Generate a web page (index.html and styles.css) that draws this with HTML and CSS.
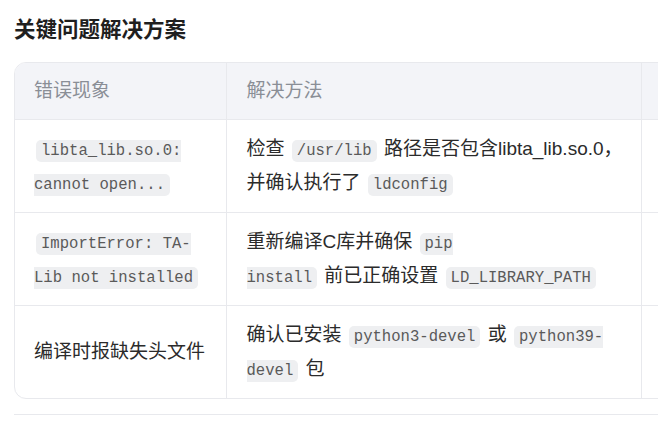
FILE: index.html
```html
<!DOCTYPE html>
<html lang="zh-CN">
<head>
<meta charset="utf-8">
<title>关键问题解决方案</title>
<link rel="stylesheet" href="styles.css">
</head>
<body>
<div class="page">
  <h3 class="title">关键问题解决方案</h3>
  <div class="table-wrap">
    <table class="grid">
      <colgroup>
        <col class="c1"><col class="c2"><col class="c3">
      </colgroup>
      <thead>
        <tr><th>错误现象</th><th>解决方法</th><th></th></tr>
      </thead>
      <tbody>
        <tr>
          <td><code>libta_lib.so.0: cannot open...</code></td>
          <td>检查 <code>/usr/lib</code> 路径是否包含libta_lib.so.0，并确认执行了 <code>ldconfig</code></td>
          <td></td>
        </tr>
        <tr>
          <td><code>ImportError: TA-Lib not installed</code></td>
          <td>重新编译C库并确保 <code>pip<br>install</code> 前已正确设置 <code>LD_LIBRARY_PATH</code></td>
          <td></td>
        </tr>
        <tr>
          <td>编译时报缺失头文件</td>
          <td>确认已安装 <code>python3-devel</code> 或 <code>python39-devel</code> 包</td>
          <td></td>
        </tr>
      </tbody>
    </table>
  </div>
  <div class="rule"></div>
</div>
</body>
</html>
```

FILE: styles.css
```css
html, body {
  margin: 0;
  padding: 0;
  background: #ffffff;
  overflow: hidden;
}

body {
  font-family: "Liberation Sans", "Noto Sans CJK SC", sans-serif;
  color: #2b2b2b;
}

.page {
  width: 658px;
  height: 423px;
  overflow: hidden;
  padding: 16px 0 0 14px;
  box-sizing: border-box;
}

.title {
  margin: 0;
  font-family: "Noto Sans CJK SC", sans-serif;
  font-size: 21.5px;
  line-height: 24px;
  font-weight: 700;
  color: #1f1f1f;
}

.table-wrap {
  margin-top: 22px;
  width: 740px;
  border: 1px solid #e8e9ed;
  border-radius: 12px;
  overflow: hidden;
}

.grid {
  border-collapse: collapse;
  table-layout: fixed;
  width: 100%;
  font-size: 19px;
  line-height: 33.5px;
}

.c1 { width: 211px; }
.c2 { width: 415px; }

.grid th {
  background: #f3f4f8;
  color: #8a8e96;
  font-weight: 400;
  text-align: left;
  padding: 11px 8px 11px 19px;
  border-bottom: 1px solid #e8e9ed;
}

.grid td {
  padding: 12.5px 8px 12.5px 19px;
  vertical-align: middle;
  text-align: left;
}

.grid td:first-child {
  padding-right: 20px;
}

.grid th + th,
.grid td + td {
  border-left: 1px solid #e8e9ed;
  padding-left: 20px;
}

.grid tbody tr + tr td {
  border-top: 1px solid #e8e9ed;
}

.grid code {
  font-family: "Liberation Mono", "DejaVu Sans Mono", monospace;
  font-size: 15.6px;
  line-height: 18px;
  color: #5a5a5a;
  background: #eeeff1;
  border-radius: 5px;
  padding: 2px 5px;
  margin: 0 2px;
}

.rule {
  margin-top: 15px;
  height: 1px;
  background: #e8e9ed;
  width: 700px;
}
```
